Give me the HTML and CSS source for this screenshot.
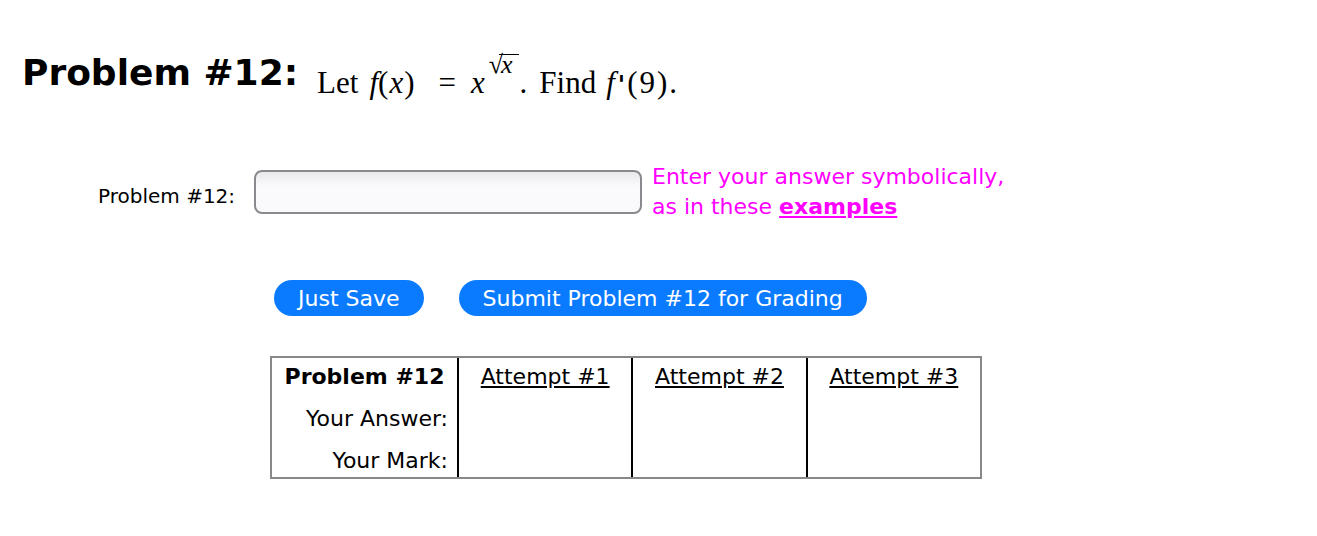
FILE: index.html
```html
<!DOCTYPE html>
<html lang="en">
<head>
    <meta charset="UTF-8">
    <title>Problem #12</title>
    <link rel="stylesheet" href="styles.css">
</head>
<body>

    <div class="problem">
        <h1 class="problem-title">Problem #12:</h1>
        <div class="statement"><span class="let">Let</span><span class="fn"><i>f</i>(<i>x</i>)</span><span class="eq">=</span><span class="base"><i>x</i></span><span class="power"><span class="radical">&radic;</span><span class="radicand"><i>x</i></span></span><span class="dot">.</span><span class="find">Find</span><span class="deriv"><i>f</i><b class="prime">'</b><span class="arg">(9).</span></span></div>
    </div>

    <div class="answer-row">
        <label class="answer-label" for="ans12">Problem #12:</label>
        <input class="answer-box" id="ans12" type="text">
        <div class="hint">
            Enter your answer symbolically,<br>
            as in these <a href="#">examples</a>
        </div>
    </div>

    <div class="buttons">
        <button class="btn">Just Save</button>
        <button class="btn">Submit Problem #12 for Grading</button>
    </div>

    <table class="attempts">
        <tr class="first">
            <th>Problem #12</th>
            <td><a href="#">Attempt #1</a></td>
            <td><a href="#">Attempt #2</a></td>
            <td><a href="#">Attempt #3</a></td>
        </tr>
        <tr>
            <td class="row-head">Your Answer:</td>
            <td></td>
            <td></td>
            <td></td>
        </tr>
        <tr class="last">
            <td class="row-head">Your Mark:</td>
            <td></td>
            <td></td>
            <td></td>
        </tr>
    </table>

</body>
</html>
```

FILE: styles.css
```css
body {
    margin: 0;
    padding: 0 22px;
    font-family: 'DejaVu Sans', Verdana, sans-serif;
    color: #000;
    background: #fff;
}

/* problem statement line */
.problem {
    display: flex;
    align-items: baseline;
    gap: 19px;
    padding-top: 52px;
}

.problem-title {
    margin: 0;
    font-size: 36px;
    line-height: 42px;
    font-weight: bold;
}

.statement {
    font-family: 'Liberation Serif', 'Times New Roman', serif;
    font-size: 31px;
    white-space: nowrap;
    position: relative;
    top: 8px;
}

.fn {
    margin-left: 11px;
}

.fn i:last-child {
    margin: 0 1px;
}

.eq {
    margin-left: 24px;
}

.base {
    margin-left: 15px;
}

.power {
    display: inline-block;
    font-size: 26px;
    position: relative;
    top: -20px;
    margin-left: 4px;
}

.radical {
    display: inline-block;
}

.radicand {
    display: inline-block;
    line-height: 20px;
    border-top: 1.5px solid #000;
    padding: 0 6px 0 2px;
    margin-left: -4px;
}

.dot {
    margin-left: 1px;
}

.find {
    margin-left: 12px;
}

.deriv {
    margin-left: 10px;
}

.prime {
    font-family: 'DejaVu Sans', sans-serif;
    font-size: 24px;
    margin: 0 2px 0 3px;
}

.arg {
    letter-spacing: 2px;
}

/* answer entry */
.answer-row {
    display: flex;
    align-items: center;
    margin-top: 68px;
    padding-left: 76px;
}

.answer-label {
    font-size: 20px;
    width: 156px;
    padding-top: 8px;
}

.answer-box {
    width: 388px;
    height: 44px;
    box-sizing: border-box;
    border: 2px solid #8a8a8e;
    border-radius: 8px;
    background: linear-gradient(to bottom, #e9e9ec, #fafafc 35%);
    margin: 0;
}

.hint {
    color: #ff00ff;
    font-size: 22px;
    line-height: 30px;
    margin-left: 10px;
}

.hint a {
    color: #ff00ff;
    font-weight: bold;
}

/* buttons */
.buttons {
    display: flex;
    gap: 35px;
    margin-top: 58px;
    padding-left: 252px;
}

.btn {
    font-family: 'DejaVu Sans', Verdana, sans-serif;
    font-size: 22px;
    color: #fff;
    background: #0a7bff;
    border: none;
    border-radius: 18px;
    height: 36px;
    padding: 0 24px;
}

/* attempts table */
.attempts {
    margin-top: 40px;
    margin-left: 248px;
    width: 712px;
    table-layout: fixed;
    border-collapse: separate;
    border-spacing: 0;
    border: 2px solid #888;
    font-size: 22px;
    line-height: 26px;
}

.attempts th,
.attempts td {
    box-sizing: border-box;
    padding: 8px 0;
    vertical-align: top;
    text-align: center;
}

.attempts th,
.attempts .row-head {
    width: 185px;
}

.attempts .row-head {
    text-align: right;
    padding-right: 9px;
}

.attempts td + td,
.attempts th + td {
    border-left: 2px solid #000;
}

.attempts .first th,
.attempts .first td {
    padding-top: 6px;
}

.attempts .last td {
    padding-bottom: 3px;
}

.attempts a {
    color: #000;
}
```
